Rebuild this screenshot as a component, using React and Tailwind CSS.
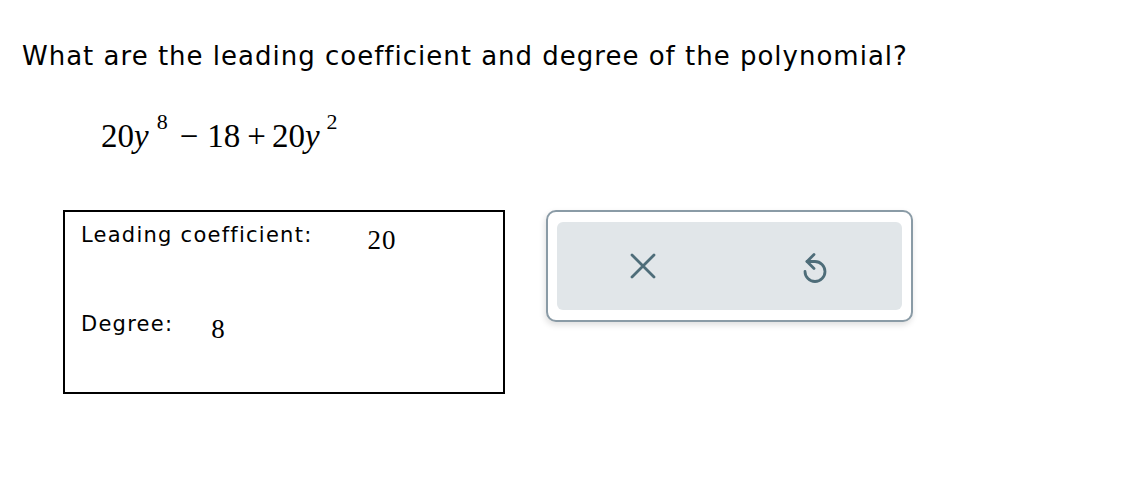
import React from 'react';

const sans = { fontFamily: '"DejaVu Sans", Verdana, sans-serif' };
const serif = { fontFamily: '"Liberation Serif", "Times New Roman", serif' };

function XIcon() {
  return (
    <svg width="26" height="26" viewBox="0 0 26 26" fill="none" stroke="#4e6d79" strokeWidth="2.8" strokeLinecap="round">
      <path d="M2 2 L24 24 M24 2 L2 24" />
    </svg>
  );
}

function UndoIcon() {
  return (
    <svg width="28" height="34" viewBox="0 0 28 34" fill="none" stroke="#4e6d79" strokeWidth="2.8" strokeLinecap="round" strokeLinejoin="round">
      <path d="M5 10.5 H13 A10 10 0 1 1 3 20.5" />
      <path d="M12 3.5 L5 10.5 L12 17.5" />
    </svg>
  );
}

export default function App() {
  return (
    <div className="w-[1140px] h-[494px] bg-white text-black">
      <div className="pt-[38px] pl-[22px] text-[26px] leading-[36px] tracking-[1px]" style={sans}>
        What are the leading coefficient and degree of the polynomial?
      </div>
      <div className="pl-[101px] pt-[42px] text-[33px] leading-[40px] flex items-baseline" style={serif}>
        <span>20</span>
        <span className="italic">y</span>
        <span className="text-[22px] relative -top-[18px] ml-[8px]">8</span>
        <span className="ml-[12px]">−</span>
        <span className="ml-[9px]">18</span>
        <span className="ml-[7px]">+</span>
        <span className="ml-[6px]">20</span>
        <span className="italic">y</span>
        <span className="text-[22px] relative -top-[18px] ml-[7px]">2</span>
      </div>
      <div className="flex items-start pl-[63px] pt-[50px] gap-[41px]">
        <div className="w-[442px] h-[184px] border-2 border-black pl-[16px] pt-[9px]">
          <div className="flex items-start h-[28px]">
            <span className="text-[21px] leading-[28px] tracking-[1.25px]" style={sans}>Leading coefficient:</span>
            <span className="text-[27px] leading-[28px] tracking-[1px] ml-[55px] mt-[5px]" style={serif}>20</span>
          </div>
          <div className="flex items-start h-[28px] mt-[61px]">
            <span className="text-[21px] leading-[28px] tracking-[1.25px]" style={sans}>Degree:</span>
            <span className="text-[27px] leading-[28px] ml-[38px] mt-[5px]" style={serif}>8</span>
          </div>
        </div>
        <div className="w-[367px] h-[112px] border-2 border-[#8a9ba6] rounded-[10px] bg-white shadow-[-1px_3px_6px_rgba(0,0,0,0.13)] px-[9px] py-[10px]">
          <div className="h-full bg-[#e1e6e9] rounded-[6px] flex items-center">
            <div className="flex-1 flex justify-center">
              <XIcon />
            </div>
            <div className="flex-1 flex justify-center pt-[4px]">
              <UndoIcon />
            </div>
          </div>
        </div>
      </div>
    </div>
  );
}
